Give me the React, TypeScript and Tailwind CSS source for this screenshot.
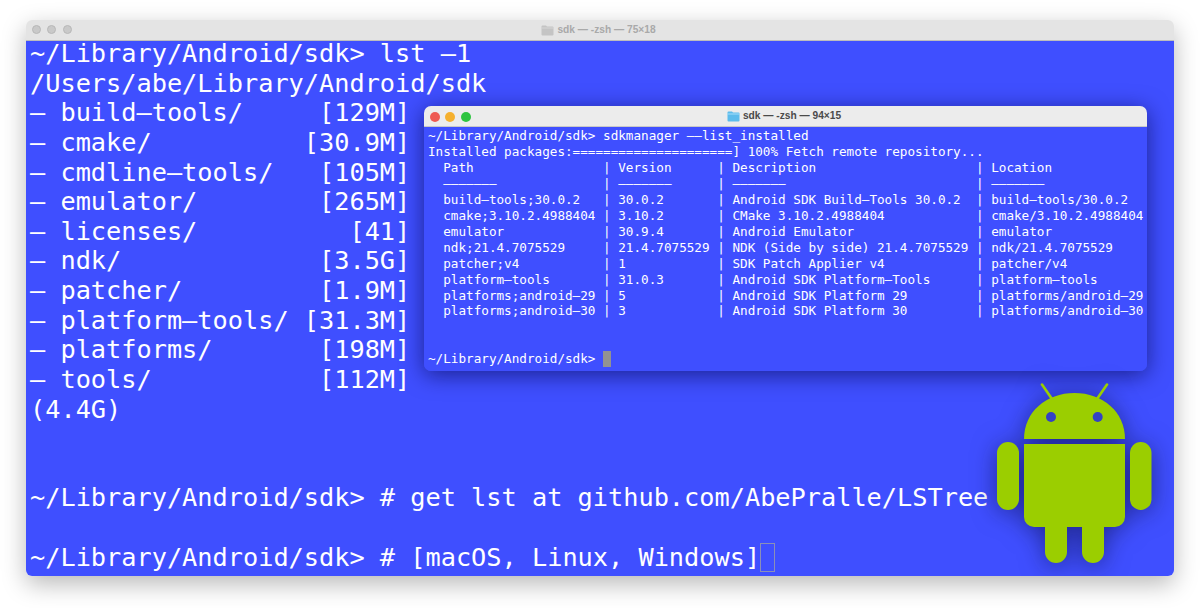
const big = [
  "~/Library/Android/sdk> lst –1",
  "/Users/abe/Library/Android/sdk",
  "– build–tools/     [129M]",
  "– cmake/          [30.9M]",
  "– cmdline–tools/   [105M]",
  "– emulator/        [265M]",
  "– licenses/          [41]",
  "– ndk/             [3.5G]",
  "– patcher/         [1.9M]",
  "– platform–tools/ [31.3M]",
  "– platforms/       [198M]",
  "– tools/           [112M]",
  "(4.4G)",
  "",
  "",
  "~/Library/Android/sdk> # get lst at github.com/AbePralle/LSTree",
  "",
  "",
].join("\n");

const small = [
  "~/Library/Android/sdk> sdkmanager ––list_installed",
  "Installed packages:=====================] 100% Fetch remote repository...",
  "  Path                 | Version      | Description                     | Location",
  "  –––––––              | –––––––      | –––––––                         | –––––––",
  "  build–tools;30.0.2   | 30.0.2       | Android SDK Build–Tools 30.0.2  | build–tools/30.0.2",
  "  cmake;3.10.2.4988404 | 3.10.2       | CMake 3.10.2.4988404            | cmake/3.10.2.4988404",
  "  emulator             | 30.9.4       | Android Emulator                | emulator",
  "  ndk;21.4.7075529     | 21.4.7075529 | NDK (Side by side) 21.4.7075529 | ndk/21.4.7075529",
  "  patcher;v4           | 1            | SDK Patch Applier v4            | patcher/v4",
  "  platform–tools       | 31.0.3       | Android SDK Platform–Tools      | platform–tools",
  "  platforms;android–29 | 5            | Android SDK Platform 29         | platforms/android–29",
  "  platforms;android–30 | 3            | Android SDK Platform 30         | platforms/android–30",
  "",
  "",
  "",
].join("\n");

function Folder({ blue }: { blue?: boolean }) {
  return (
    <svg width="13" height="11" viewBox="0 0 13 11" className="shrink-0">
      <path d="M0.5 1.5 a1 1 0 0 1 1-1 h3.5 l1 1 h5.5 a1 1 0 0 1 1 1 v7 a1 1 0 0 1-1 1 h-10 a1 1 0 0 1-1-1z" fill={blue ? "#5cbcec" : "#c4c4c4"} />
      <rect x="0.5" y="2.5" width="12" height="1" fill={blue ? "#a6defa" : "#d6d6d6"} />
    </svg>
  );
}

function Android() {
  return (
    <svg
      width="170"
      height="190"
      viewBox="990 380 170 190"
      className="absolute left-[964px] top-[339px] drop-shadow-[0_3px_12px_rgba(10,10,60,0.55)]"
    >
      <g fill="#9bce00">
        <path d="M1024 439 C1024 412 1046 393 1074.5 393 C1103 393 1125 412 1125 439 Z" />
        <path d="M1024 444 H1125 V517 A10 10 0 0 1 1115 527 H1104 V552 A11 11 0 0 1 1082 552 V527 H1067 V552 A11 11 0 0 1 1045 552 V527 H1034 A10 10 0 0 1 1024 517 Z" />
        <rect x="997" y="442" width="22" height="68" rx="11" />
        <rect x="1130" y="442" width="21.5" height="68" rx="10.7" />
      </g>
      <g stroke="#9bce00" strokeWidth="2.6" strokeLinecap="round">
        <line x1="1042" y1="384.5" x2="1052" y2="399" />
        <line x1="1107" y1="384.5" x2="1097" y2="399" />
      </g>
      <circle cx="1051" cy="417" r="5" fill="#3441c4" />
      <circle cx="1097.7" cy="417" r="5" fill="#3441c4" />
    </svg>
  );
}

export default function App() {
  return (
    <div className="w-[1200px] h-[608px] bg-white pt-[20px] px-[26px] overflow-hidden font-['DejaVu_Sans_Mono',monospace]">
      <div className="w-[1148px] h-[556px] rounded-[6px] overflow-hidden flex flex-col shadow-[0_8px_24px_rgba(0,0,0,0.28)]">
        <div className="relative h-[21px] shrink-0 bg-[#e4e4e4] border-b border-[#bdbdbd] pr-[3px] flex items-center justify-center gap-[3px] font-['Liberation_Sans',sans-serif] font-bold text-[10.2px] text-[#a9a9a9]">
          <div className="absolute left-[5.5px] top-[5px] flex gap-[6.5px]">
            <span className="w-[9px] h-[9px] rounded-full bg-[#c9c9c9] border border-[#b8b8b8]" />
            <span className="w-[9px] h-[9px] rounded-full bg-[#c9c9c9] border border-[#b8b8b8]" />
            <span className="w-[9px] h-[9px] rounded-full bg-[#c9c9c9] border border-[#b8b8b8]" />
          </div>
          <Folder />
          <span>sdk — -zsh — 75×18</span>
        </div>
        <div className="relative flex-1 bg-[#3f4fff] pl-[4px] text-white text-[25.27px] leading-[29.62px]">
          <pre className="font-['DejaVu_Sans_Mono',monospace] -mt-[2px]">{big}</pre>
          <div className="flex items-start">
            <pre className="font-['DejaVu_Sans_Mono',monospace]">~/Library/Android/sdk&gt; # [macOS, Linux, Windows]</pre>
            <span className="w-[15px] h-[29px] border border-[#8a8fb8]" />
          </div>
          <div className="absolute left-[398px] top-[65px] w-[723px] h-[265px] rounded-[7px] overflow-hidden flex flex-col shadow-[0_4px_22px_rgba(5,5,70,0.6)]">
            <div className="relative h-[21px] shrink-0 bg-[#ececec] border-b border-[#c8c8c8] pr-[3px] flex items-center justify-center gap-[3px] font-['Liberation_Sans',sans-serif] font-bold text-[10.2px] text-[#4a4a4a]">
              <div className="absolute left-[6px] top-[5.5px] flex gap-[5.3px]">
                <span className="w-[10px] h-[10px] rounded-full bg-[#ee5a52]" />
                <span className="w-[10px] h-[10px] rounded-full bg-[#f5b02e]" />
                <span className="w-[10px] h-[10px] rounded-full bg-[#2ec440]" />
              </div>
              <Folder blue />
              <span>sdk — -zsh — 94×15</span>
            </div>
            <div className="flex-1 bg-[#3f4fff] pl-[4px] pt-[1px] text-white text-[12.65px] leading-[15.95px]">
              <pre className="font-['DejaVu_Sans_Mono',monospace]">{small}</pre>
              <div className="flex items-start">
                <pre className="font-['DejaVu_Sans_Mono',monospace]">~/Library/Android/sdk&gt; </pre>
                <span className="w-[8px] h-[16px] bg-[#929292]" />
              </div>
            </div>
          </div>
          <Android />
        </div>
      </div>
    </div>
  );
}
